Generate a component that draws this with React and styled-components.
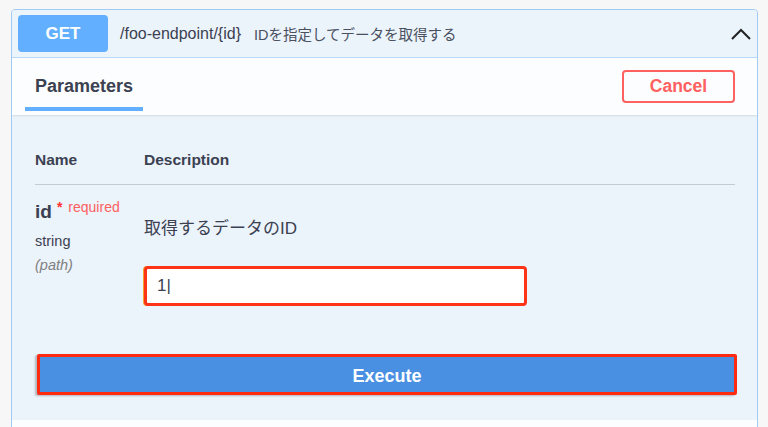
import React from "react";
import styled, { createGlobalStyle } from "styled-components";

const Global = createGlobalStyle`
  html, body { margin: 0; padding: 0; background: #f7f7f7; }
  body { font-family: "Liberation Sans", "Noto Sans CJK JP", sans-serif; color: #3b4151; }
  * { box-sizing: border-box; }
`;

const Card = styled.div`
  margin: 9px 10px 0 11px;
  border: 1px solid #9fcbf5;
  border-radius: 4px;
  overflow: hidden;
  background: #ebf3fb;
`;

const Summary = styled.div`
  display: flex;
  align-items: center;
  height: 48px;
  padding: 0 6px;
  border-bottom: 1px solid #b9d9f8;
  background: #ebf3fb;
`;

const Method = styled.div`
  width: 90px;
  height: 37px;
  border-radius: 4px;
  background: #61affe;
  color: #fff;
  font-weight: 700;
  font-size: 17px;
  display: flex;
  align-items: center;
  justify-content: center;
`;

const Path = styled.span`
  margin-left: 12px;
  font-size: 16px;
  color: #3b4151;
`;

const SummaryDesc = styled.span`
  margin-left: 13px;
  font-size: 14.5px;
  color: #4a5060;
`;

const Chevron = styled.svg`
  margin-left: auto;
  width: 20px;
  height: 12px;
`;

const TabBar = styled.div`
  height: 57px;
  display: flex;
  align-items: center;
  justify-content: space-between;
  padding: 0 22px 0 13px;
  background: #fcfdfe;
  box-shadow: 0 1px 2px rgba(0, 0, 0, 0.1);
  position: relative;
`;

const Tab = styled.div`
  align-self: stretch;
  display: flex;
  align-items: center;
  padding: 7px 10px 0;
  margin-bottom: 4px;
  border-bottom: 4px solid #61affe;
  font-weight: 700;
  font-size: 18px;
  color: #3b4151;
`;

const CancelButton = styled.button`
  width: 113px;
  height: 33px;
  border: 2px solid #ff6060;
  border-radius: 4px;
  background: transparent;
  color: #ff6060;
  font-family: inherit;
  font-weight: 700;
  font-size: 17.5px;
  padding: 0;
`;

const Body = styled.div`
  padding: 0 22px 25px 23px;
  background: #ebf3fb;
`;

const Row = styled.div`
  display: grid;
  grid-template-columns: 109px 1fr;
`;

const HeadRow = styled(Row)`
  padding: 36px 0 15px;
  border-bottom: 1px solid #c6cbd3;
`;

const HeadCell = styled.div`
  font-size: 15.5px;
  font-weight: 700;
  line-height: 18px;
  color: #3b4151;
`;

const NameCell = styled.div`
  padding-top: 10px;
  display: flex;
  flex-direction: column;
`;

const ParamName = styled.div`
  font-size: 19px;
  font-weight: 700;
  line-height: 24px;
  color: #3b4151;
`;

const Required = styled.span`
  font-size: 14px;
  font-weight: 400;
  color: #ff6060;
  vertical-align: 6px;
  margin-left: 5px;
`;

const Star = styled.span`
  color: #ff3030;
  font-weight: 700;
  margin-right: 6px;
`;

const TypeText = styled.div`
  margin-top: 7px;
  font-size: 14.5px;
  line-height: 20px;
  color: #3b4151;
`;

const InText = styled.div`
  margin-top: 4px;
  font-size: 14.5px;
  line-height: 20px;
  font-style: italic;
  color: #808080;
`;

const DescCell = styled.div`
  padding-top: 32px;
  display: flex;
  flex-direction: column;
  align-items: flex-start;
`;

const DescText = styled.div`
  font-size: 17px;
  line-height: 24px;
  color: #3b4151;
`;

const Input = styled.input`
  margin-top: 25px;
  width: 383px;
  height: 40px;
  border: 3px solid #ff3318;
  border-radius: 4px;
  box-shadow: -1px 0 0 #f3a12a;
  background: #fff;
  padding: 0 10px;
  font-family: inherit;
  font-size: 17px;
  color: #3b4151;
  outline: none;
`;

const ExecuteWrap = styled.div`
  padding-top: 48px;
  margin: 0 -2px 0 2px;
`;

const ExecuteButton = styled.button`
  width: 100%;
  height: 41px;
  border: 3px solid #ff2a12;
  border-radius: 2px;
  background: #4990e2;
  color: #fff;
  font-family: inherit;
  font-weight: 700;
  font-size: 18px;
  box-shadow: -2px 1px 2px rgba(0, 0, 0, 0.25);
  padding: 3px 0 0;
`;

const Responses = styled.div`
  height: 40px;
  background: #fcfdfe;
`;

export default function App() {
  return (
    <>
      <Global />
      <Card>
        <Summary>
          <Method>GET</Method>
          <Path>/foo-endpoint/&#123;id&#125;</Path>
          <SummaryDesc>IDを指定してデータを取得する</SummaryDesc>
          <Chevron viewBox="0 0 20 12">
            <path d="M1 11 L10 2 L19 11" fill="none" stroke="#222" strokeWidth="2" />
          </Chevron>
        </Summary>
        <TabBar>
          <Tab>Parameters</Tab>
          <CancelButton>Cancel</CancelButton>
        </TabBar>
        <Body>
          <HeadRow>
            <HeadCell>Name</HeadCell>
            <HeadCell>Description</HeadCell>
          </HeadRow>
          <Row>
            <NameCell>
              <ParamName>
                id
                <Required>
                  <Star>*</Star>required
                </Required>
              </ParamName>
              <TypeText>string</TypeText>
              <InText>(path)</InText>
            </NameCell>
            <DescCell>
              <DescText>取得するデータのID</DescText>
              <Input defaultValue="1|" />
            </DescCell>
          </Row>
          <ExecuteWrap>
            <ExecuteButton>Execute</ExecuteButton>
          </ExecuteWrap>
        </Body>
        <Responses />
      </Card>
    </>
  );
}
